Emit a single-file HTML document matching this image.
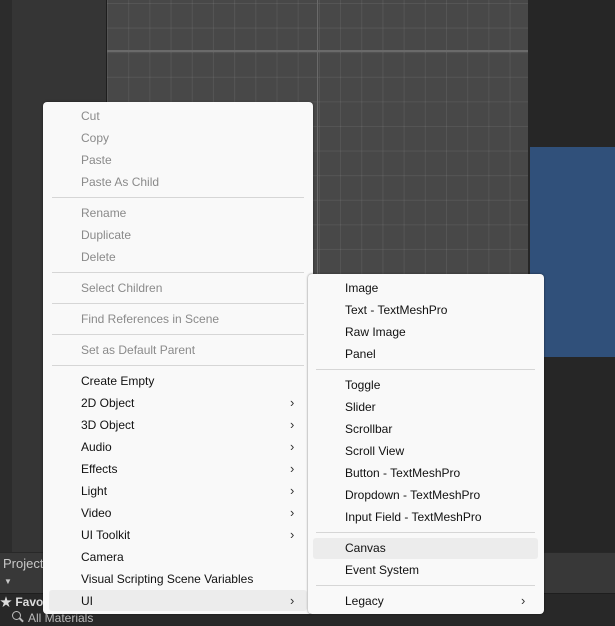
<!DOCTYPE html>
<html><head><meta charset="utf-8"><style>
body{margin:0;width:615px;height:625px;overflow:hidden;background:#262626;position:relative;font-family:"Liberation Sans","Noto Sans CJK KR",sans-serif;}
div{position:absolute;box-sizing:border-box}
.m{background:#f9f9f9;border-radius:4px;box-shadow:0 0 2px rgba(0,0,0,.5)}
.t{font-size:12px;line-height:22px;height:22px;color:#111;white-space:nowrap;margin-top:1px}
.d{color:#8a8a8a}
.s{height:1px;background:#d6d6d6}
.a{font-size:13px;color:#333}
</style></head><body>
<div style="left:0;top:0;width:12px;height:625px;background:#2c2c2c"></div>
<div style="left:12px;top:0;width:94px;height:625px;background:#353535"></div>
<div style="left:106px;top:0;width:1px;height:625px;background:#1e1e1e"></div>
<div style="left:107px;top:0;width:421px;height:552px;background-color:#484848;background-image:linear-gradient(90deg,rgba(255,255,255,.07) 1px,transparent 1px),linear-gradient(rgba(255,255,255,.07) 1px,transparent 1px);background-size:21.2px 24.6px;background-position:0 3px"></div>
<div style="left:107px;top:50px;width:421px;height:2px;background:#6a6a6a"></div>
<div style="left:317px;top:0;width:1px;height:552px;background:#6a6a6a"></div>
<div style="left:530px;top:147px;width:85px;height:210px;background:#30507a"></div>
<div style="left:0;top:552px;width:615px;height:73px;background:#282828"></div>
<div style="left:0;top:553px;width:615px;height:40px;background:#383838"></div>
<div style="left:0;top:593px;width:615px;height:1px;background:#1e1e1e"></div>
<div style="left:3px;top:556px;font-size:13px;color:#c8c8c8;line-height:16px">Project</div>
<div style="left:4px;top:577px;font-size:8px;color:#c8c8c8">▼</div>
<div style="left:0;top:594px;font-size:12px;color:#ddd;font-weight:bold;line-height:16px">★ Favo</div>
<div style="left:12px;top:611px;width:9px;height:9px;border:1.5px solid #bbb;border-radius:50%"></div>
<div style="left:19px;top:619px;width:5px;height:1.5px;background:#bbb;transform:rotate(45deg)"></div>
<div style="left:28px;top:610px;font-size:12px;color:#bbb;line-height:16px">All Materials</div>

<div class="m" style="left:43px;top:102px;width:270px;height:512px"></div>
<div class="t d" style="left:81px;top:104px">Cut</div>
<div class="t d" style="left:81px;top:126px">Copy</div>
<div class="t d" style="left:81px;top:148px">Paste</div>
<div class="t d" style="left:81px;top:170px">Paste As Child</div>
<div class="s" style="left:52px;top:197px;width:252px"></div>
<div class="t d" style="left:81px;top:201px">Rename</div>
<div class="t d" style="left:81px;top:223px">Duplicate</div>
<div class="t d" style="left:81px;top:245px">Delete</div>
<div class="s" style="left:52px;top:272px;width:252px"></div>
<div class="t d" style="left:81px;top:276px">Select Children</div>
<div class="s" style="left:52px;top:303px;width:252px"></div>
<div class="t d" style="left:81px;top:307px">Find References in Scene</div>
<div class="s" style="left:52px;top:334px;width:252px"></div>
<div class="t d" style="left:81px;top:338px">Set as Default Parent</div>
<div class="s" style="left:52px;top:365px;width:252px"></div>
<div class="t" style="left:81px;top:369px">Create Empty</div>
<div class="t" style="left:81px;top:391px">2D Object</div>
<div class="t" style="left:81px;top:413px">3D Object</div>
<div class="t" style="left:81px;top:435px">Audio</div>
<div class="t" style="left:81px;top:457px">Effects</div>
<div class="t" style="left:81px;top:479px">Light</div>
<div class="t" style="left:81px;top:501px">Video</div>
<div class="t" style="left:81px;top:523px">UI Toolkit</div>
<div class="t" style="left:81px;top:545px">Camera</div>
<div class="t" style="left:81px;top:567px">Visual Scripting Scene Variables</div>
<div style="left:49px;top:590px;width:258px;height:21px;background:#ececec;border-radius:3px"></div>
<div class="t" style="left:81px;top:589px">UI</div>
<div class="t a" style="left:290px;top:391px">›</div>
<div class="t a" style="left:290px;top:413px">›</div>
<div class="t a" style="left:290px;top:435px">›</div>
<div class="t a" style="left:290px;top:457px">›</div>
<div class="t a" style="left:290px;top:479px">›</div>
<div class="t a" style="left:290px;top:501px">›</div>
<div class="t a" style="left:290px;top:523px">›</div>
<div class="t a" style="left:290px;top:589px">›</div>

<div class="m" style="left:308px;top:274px;width:236px;height:340px"></div>
<div class="t" style="left:345px;top:276px">Image</div>
<div class="t" style="left:345px;top:298px">Text - TextMeshPro</div>
<div class="t" style="left:345px;top:320px">Raw Image</div>
<div class="t" style="left:345px;top:342px">Panel</div>
<div class="s" style="left:316px;top:369px;width:219px"></div>
<div class="t" style="left:345px;top:373px">Toggle</div>
<div class="t" style="left:345px;top:395px">Slider</div>
<div class="t" style="left:345px;top:417px">Scrollbar</div>
<div class="t" style="left:345px;top:439px">Scroll View</div>
<div class="t" style="left:345px;top:461px">Button - TextMeshPro</div>
<div class="t" style="left:345px;top:483px">Dropdown - TextMeshPro</div>
<div class="t" style="left:345px;top:505px">Input Field - TextMeshPro</div>
<div class="s" style="left:316px;top:532px;width:219px"></div>
<div style="left:313px;top:538px;width:225px;height:21px;background:#ececec;border-radius:3px"></div>
<div class="t" style="left:345px;top:536px">Canvas</div>
<div class="t" style="left:345px;top:558px">Event System</div>
<div class="s" style="left:316px;top:585px;width:219px"></div>
<div class="t" style="left:345px;top:589px">Legacy</div>
<div class="t a" style="left:521px;top:589px">›</div>
</body></html>
